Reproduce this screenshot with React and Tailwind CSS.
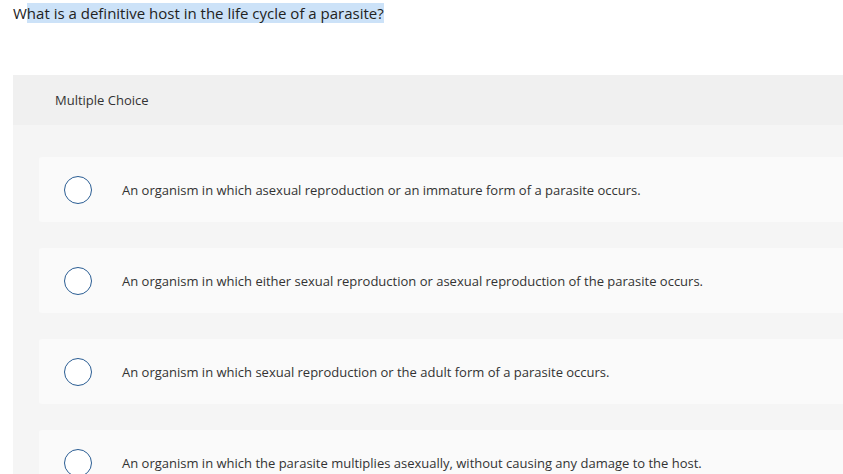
import React from 'react';

const options = [
  'An organism in which asexual reproduction or an immature form of a parasite occurs.',
  'An organism in which either sexual reproduction or asexual reproduction of the parasite occurs.',
  'An organism in which sexual reproduction or the adult form of a parasite occurs.',
  'An organism in which the parasite multiplies asexually, without causing any damage to the host.',
];

const Option = ({ text }) => (
  <div className="flex items-center h-[65px] bg-[#fafafa] rounded-[3px]">
    <span className="ml-[25px] w-[28px] h-[28px] rounded-full border-[1.5px] border-[#2a5d93] bg-white shrink-0" />
    <span className="ml-[30px] pt-[2px] text-[13px] text-[#333]">{text}</span>
  </div>
);

const App = () => {
  return (
    <div className="w-[843px] h-[474px] overflow-hidden bg-white" style={{ fontFamily: '"Open Sans", sans-serif' }}>
      <div className="pt-[2px] pl-[13px] text-[15px] leading-[22px] text-[#222]">
        W<span className="bg-[#cce2f8]">hat is a definitive host in the life cycle of a parasite?</span>
      </div>
      <div className="mt-[51px] ml-[13px] w-[860px] bg-[#f5f5f5]">
        <div className="h-[50px] bg-[#f0f0f0] flex items-center pl-[42px] pt-[2px] text-[13px] text-[#333]">
          Multiple Choice
        </div>
        <div className="pt-[32px] pl-[26px] flex flex-col gap-[26px]">
          {options.map((o) => (
            <Option key={o} text={o} />
          ))}
        </div>
      </div>
    </div>
  );
};

export default App;
